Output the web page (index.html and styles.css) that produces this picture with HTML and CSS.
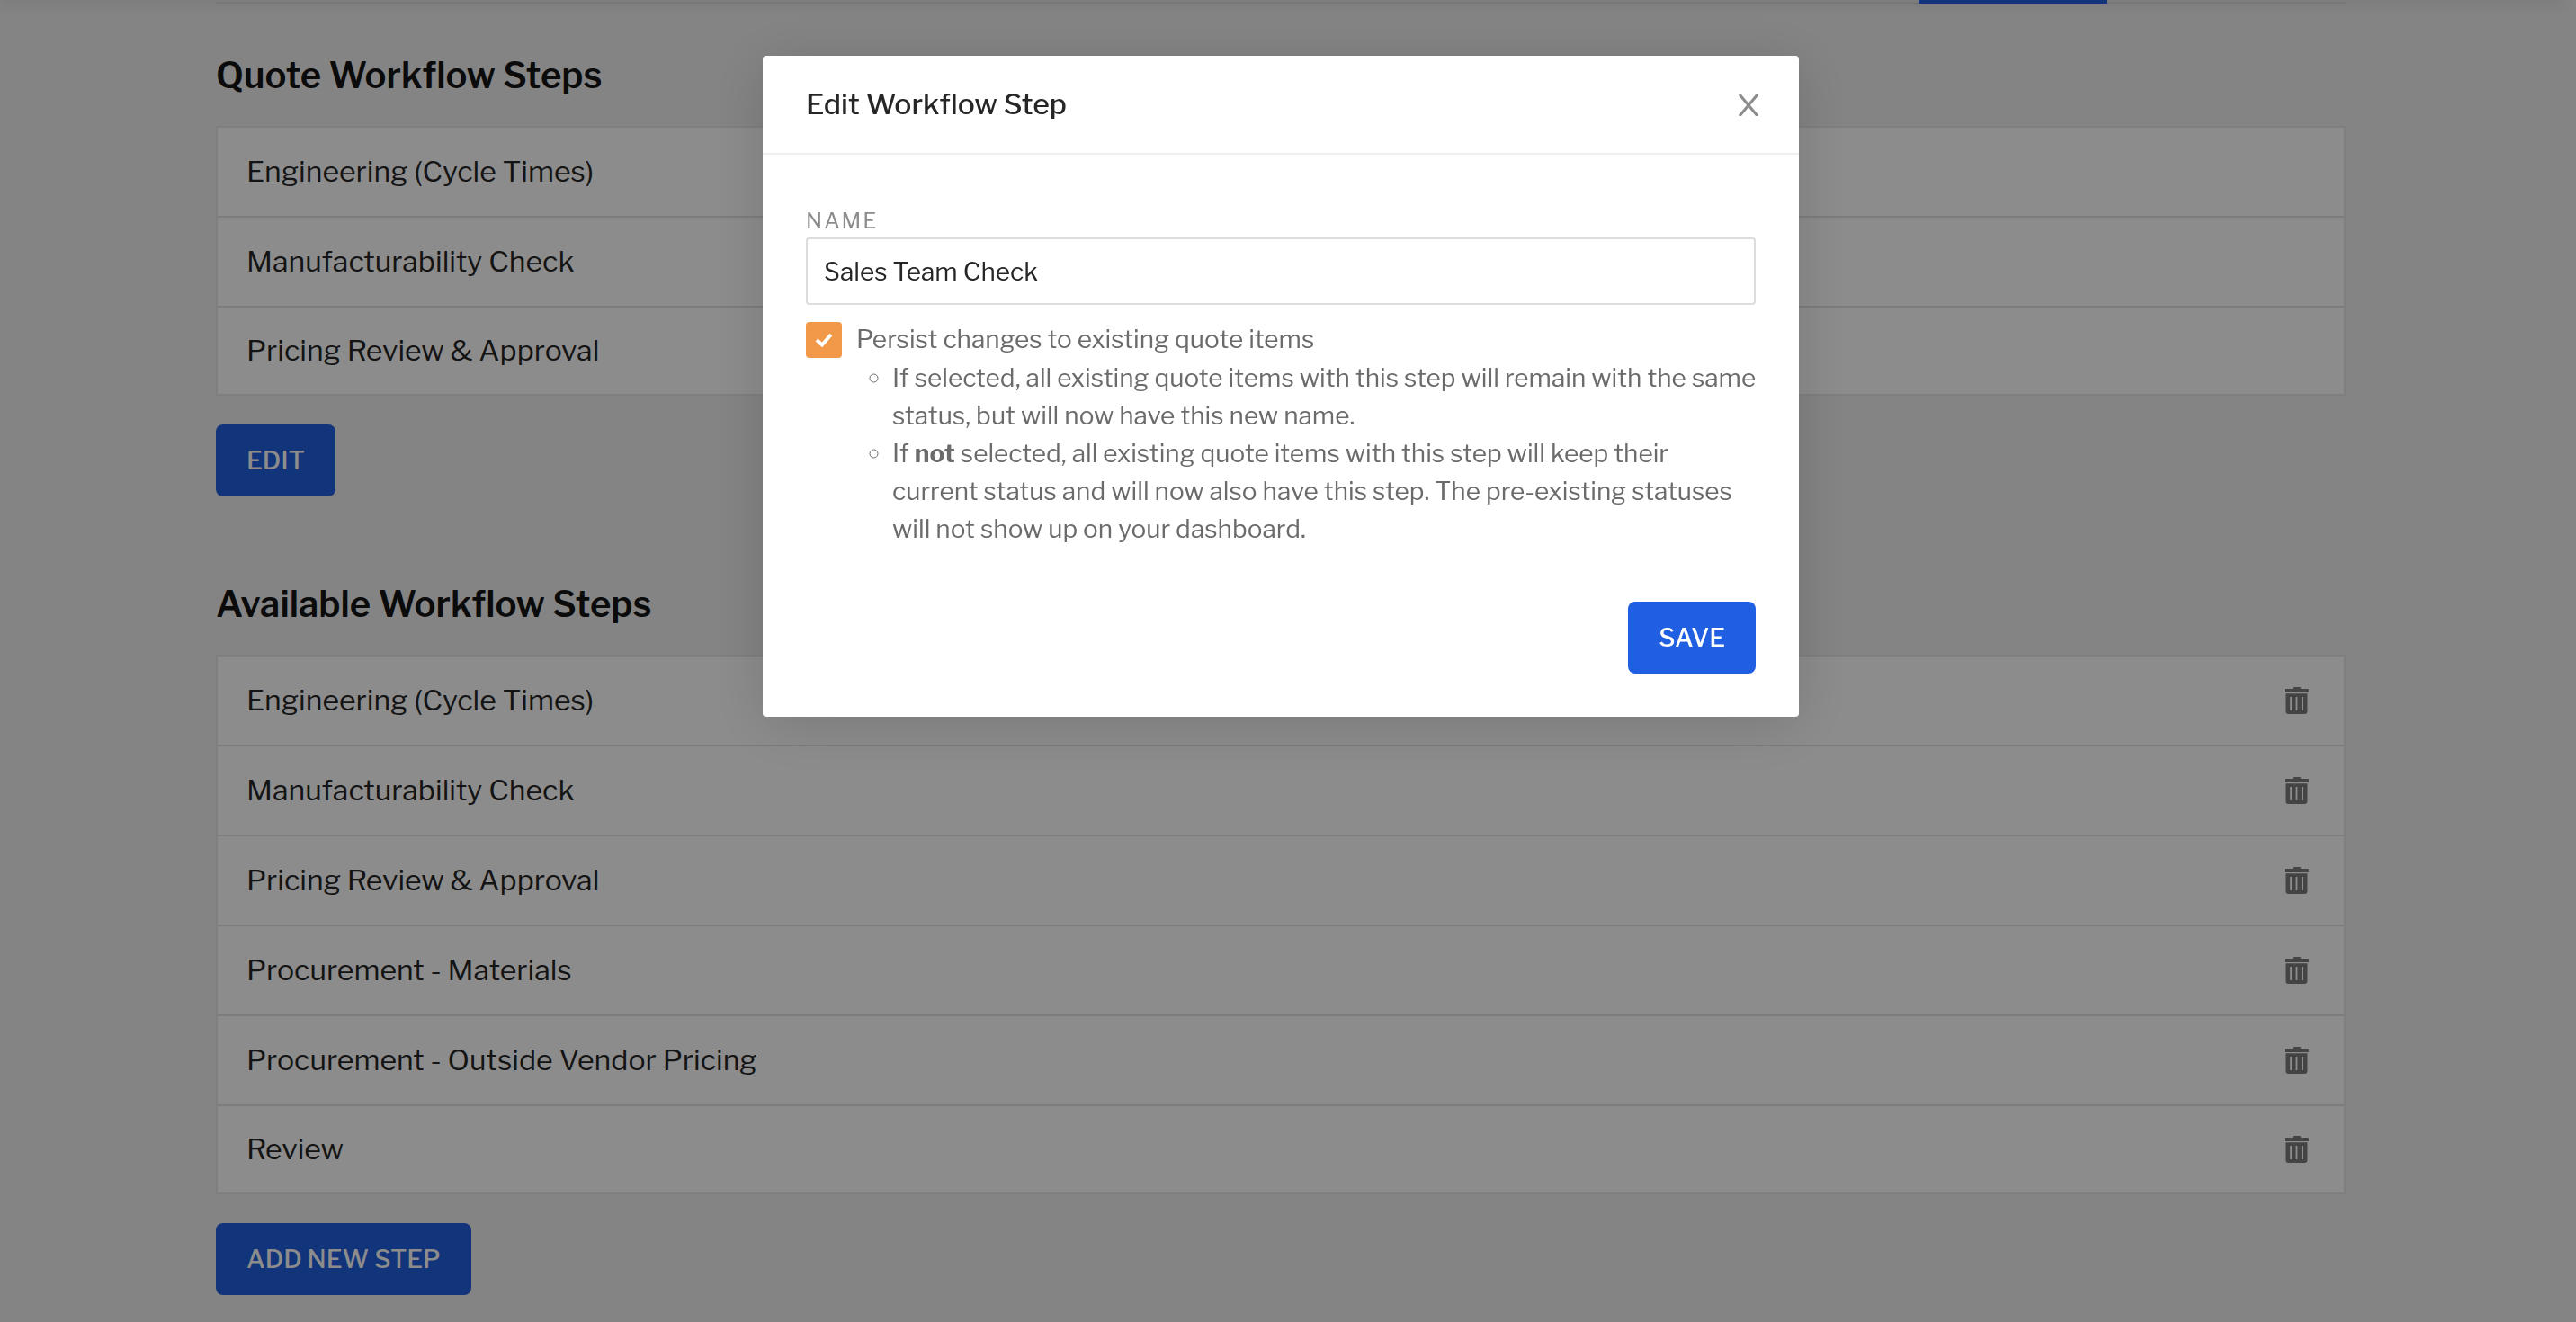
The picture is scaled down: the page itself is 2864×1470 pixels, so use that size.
FILE: index.html
```html
<!DOCTYPE html>
<html lang="en">
<head>
    <meta charset="UTF-8">
    <meta name="viewport" content="width=device-width, initial-scale=1.0">
    <title>Workflow Steps</title>
    <link rel="stylesheet" href="styles.css">
</head>
<body>
    <!-- trash icon, reused in every row -->
    <svg class="sprite" aria-hidden="true">
        <symbol id="trash" viewBox="0 0 27 30">
            <path d="M9 2V1q0-1 1-1h7q1 0 1 1v1h8q1 0 1 1v3H0V3q0-1 1-1z"/>
            <path fill-rule="evenodd" d="M1.500 7.300h24V27q0 3-3 3h-18q-3 0-3-3zM6.200 11v15h1.800V11zM12.600 11v15h1.800V11zM19 11v15h1.800V11z"/>
        </symbol>
    </svg>

    <header class="topbar"></header>

    <main class="page">
        <div class="tabs"><span class="tab-active"></span></div>

        <section class="section">
            <h2>Quote Workflow Steps</h2>
            <ul class="steps">
                <li>Engineering (Cycle Times)</li>
                <li>Manufacturability Check</li>
                <li>Pricing Review &amp; Approval</li>
            </ul>
            <button type="button" class="btn">EDIT</button>
        </section>

        <section class="section">
            <h2>Available Workflow Steps</h2>
            <ul class="steps">
                <li>Engineering (Cycle Times)
                    <button type="button" class="delete" aria-label="Delete"><svg><use href="#trash"/></svg></button></li>
                <li>Manufacturability Check
                    <button type="button" class="delete" aria-label="Delete"><svg><use href="#trash"/></svg></button></li>
                <li>Pricing Review &amp; Approval
                    <button type="button" class="delete" aria-label="Delete"><svg><use href="#trash"/></svg></button></li>
                <li>Procurement - Materials
                    <button type="button" class="delete" aria-label="Delete"><svg><use href="#trash"/></svg></button></li>
                <li>Procurement - Outside Vendor Pricing
                    <button type="button" class="delete" aria-label="Delete"><svg><use href="#trash"/></svg></button></li>
                <li>Review
                    <button type="button" class="delete" aria-label="Delete"><svg><use href="#trash"/></svg></button></li>
            </ul>
            <button type="button" class="btn">ADD NEW STEP</button>
        </section>
    </main>

    <div class="overlay">
        <form class="modal" role="dialog" aria-labelledby="modal-title">
            <div class="modal-header">
                <h3 id="modal-title">Edit Workflow Step</h3>
                <button type="button" class="close" aria-label="Close">
                    <svg viewBox="0 0 22 24"><path d="M1 0L21 24M21 0L1 24"/></svg>
                </button>
            </div>
            <div class="modal-body">
                <label class="field-label" for="step-name">NAME</label>
                <input type="text" class="field" id="step-name" value="Sales Team Check">

                <div class="persist">
                    <span class="check">
                        <input type="checkbox" id="persist" checked>
                        <svg viewBox="0 0 20 16"><path d="M2 8l6 5.500L18 2"/></svg>
                    </span>
                    <label for="persist">Persist changes to existing quote items</label>
                </div>
                <ul class="notes">
                    <li>If selected, all existing quote items with this step will remain with the same status, but will now have this new name.</li>
                    <li>If <b>not</b> selected, all existing quote items with this step will keep their current status and will now also have this step. The pre-existing statuses will not show up on your dashboard.</li>
                </ul>

                <div class="modal-footer">
                    <button type="submit" class="btn">SAVE</button>
                </div>
            </div>
        </form>
    </div>
</body>
</html>
```
FILE: styles.css
```css
* {
    box-sizing: border-box;
}
body {
    margin: 0;
    min-height: 100vh;
    padding-right: 16px; /* scrollbar gutter */
    overflow: hidden;
    background: #f0f0f0;
    color: #262626;
    font-family: "Libre Franklin", "Open Sans", sans-serif;
    font-size: 28px;
}
h2, h3, ul {
    margin: 0;
    padding: 0;
}
button, input {
    font-family: inherit;
}
.sprite {
    display: none;
}

/* page */
.topbar {
    height: 0;
    box-shadow: 0 0 16px 2px rgba(0, 0, 0, 0.2);
}
.page {
    padding: 0 240px;
}
.tabs {
    display: flex;
    justify-content: flex-end;
    height: 4px;
    padding-right: 265px;
    background: linear-gradient(#d9d9d9, #d9d9d9) bottom / 100% 2px no-repeat;
}
.tab-active {
    width: 210px;
    background: #205fe1;
}
.section {
    padding-top: 52px;
    margin-bottom: 40px;
}
h2 {
    margin-bottom: 28px;
    color: #141414;
    font-size: 40px;
    font-weight: 600;
    line-height: 56px;
}
.steps {
    margin-bottom: 32px;
    border: 2px solid #e7e7e7;
    background: #fff;
    font-size: 32px;
    line-height: 50px;
    list-style: none;
}
.steps li {
    display: flex;
    align-items: center;
    justify-content: space-between;
    padding: 24px 32px;
    border-bottom: 2px solid #e2e2e2;
}
.steps li:last-child {
    padding: 23px 32px;
    border-bottom: 0;
}
.delete {
    display: flex;
    padding: 0 7px;
    border: 0;
    background: none;
    fill: #7c7c7c;
}
.delete svg {
    width: 27px;
    height: 30px;
}
.btn {
    display: block;
    height: 80px;
    padding: 0 34px;
    border: 0;
    border-radius: 8px;
    background: #205fe1;
    color: #fff;
    font-size: 28px;
    font-weight: 500;
}

/* modal */
.overlay {
    position: fixed;
    inset: 0;
    padding: 62px 16px 0 0;
    background: rgba(0, 0, 0, 0.45);
}
.modal {
    width: 1152px;
    max-width: 100%;
    margin: 0 auto;
    border-radius: 4px;
    background: #fff;
    box-shadow: 0 8px 64px rgba(0, 0, 0, 0.15);
}
.modal-header {
    display: flex;
    align-items: center;
    justify-content: space-between;
    padding: 32px 45px 32px 48px;
    border-bottom: 2px solid #f0f0f0;
}
h3 {
    font-size: 32px;
    font-weight: 500;
    line-height: 44px;
}
.close {
    display: flex;
    padding: 2px 0 0;
    border: 0;
    background: none;
}
.close svg {
    width: 22px;
    height: 24px;
    fill: none;
    stroke: #8c8c8c;
    stroke-width: 3;
}
.modal-body {
    padding: 56px 48px 48px;
}
.field-label {
    display: block;
    color: #8c8c8c;
    font-size: 24px;
    letter-spacing: 2px;
    line-height: 36px;
}
.field {
    display: block;
    width: 100%;
    height: 75px;
    padding: 0 18px;
    border: 2px solid #ddd;
    border-radius: 4px;
    color: #262626;
    font-size: 28px;
}
.persist {
    display: flex;
    gap: 16px;
    margin-top: 19px;
    color: #6b6b6b;
    line-height: 38px;
}
.check {
    display: grid;
    place-items: center;
    width: 40px;
    height: 40px;
}
.check input {
    grid-area: 1 / 1;
    width: 40px;
    height: 40px;
    margin: 0;
    border-radius: 4px;
    background: #f29849;
    appearance: none;
}
.check svg {
    grid-area: 1 / 1;
    z-index: 1;
    width: 20px;
    height: 16px;
    fill: none;
    stroke: #fff;
    stroke-width: 4;
    pointer-events: none;
}
.notes {
    margin: 1px -4px 0 0;
    padding-left: 96px;
    color: #6b6b6b;
    line-height: 42px;
    list-style: circle;
}
.modal-footer {
    display: flex;
    justify-content: flex-end;
    margin-top: 60px;
}
```
